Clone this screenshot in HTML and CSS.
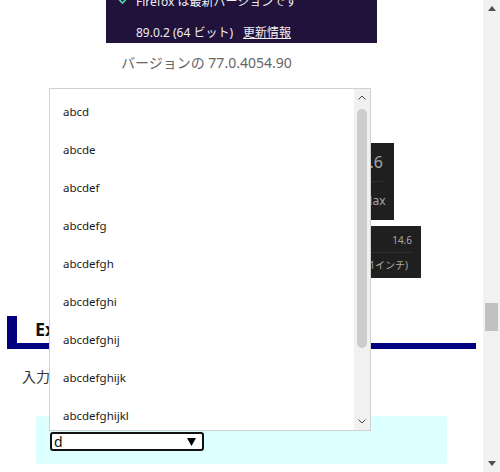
FILE: index.html
```html
<!DOCTYPE html>
<html lang="ja">
<head>
<meta charset="utf-8">
<title>Datalist</title>
<link rel="stylesheet" href="styles.css">
</head>
<body>
<div class="page">
  <div class="main">
    <div class="fx-box">
      <div class="fx-inner">
        <div class="fx-line">
          <svg class="check" width="12" height="10" viewBox="0 0 12 10"><path d="M1 4.5 L4.5 8 L11 1" fill="none" stroke="#4fdda6" stroke-width="1.6"/></svg>
          <span>Firefox は最新バージョンです</span>
        </div>
        <div class="fx-line"><span>89.0.2 (64 ビット)</span><span class="fx-link">更新情報</span></div>
      </div>
    </div>
    <p class="version">バージョンの 77.0.4054.90</p>
    <div class="specs">
      <div class="spec spec-a">
        <div class="spec-row big">14.6</div>
        <div class="spec-row">iPhone 12 Pro Max</div>
      </div>
      <div class="spec spec-b">
        <div class="spec-row">14.6</div>
        <div class="spec-row">iPad Pro (11インチ)</div>
      </div>
    </div>
    <h2 class="heading">Example</h2>
    <p class="label">入力</p>
    <div class="demo">
      <div class="select"><span>d</span><svg class="sel-arrow" width="9" height="8" viewBox="0 0 9 8"><polygon points="0,0 9,0 4.5,8" fill="#000"/></svg></div>
    </div>
    <div class="listbox">
      <ul class="options">
        <li>abcd</li>
        <li>abcde</li>
        <li>abcdef</li>
        <li>abcdefg</li>
        <li>abcdefgh</li>
        <li>abcdefghi</li>
        <li>abcdefghij</li>
        <li>abcdefghijk</li>
        <li>abcdefghijkl</li>
      </ul>
      <div class="lb-scroll">
        <svg class="lb-arrow" width="8" height="5" viewBox="0 0 8 5"><path d="M0.5 4.5 L4 1 L7.5 4.5" fill="none" stroke="#444" stroke-width="1"/></svg>
        <div class="lb-track"><div class="lb-thumb"></div></div>
        <svg class="lb-arrow" width="8" height="5" viewBox="0 0 8 5"><path d="M0.5 0.5 L4 4 L7.5 0.5" fill="none" stroke="#444" stroke-width="1"/></svg>
      </div>
    </div>
  </div>
  <div class="scrollbar">
    <div class="sb-btn"><svg width="8" height="5" viewBox="0 0 8 5"><polygon points="0,5 8,5 4,0" fill="#505050"/></svg></div>
    <div class="sb-track"><div class="sb-thumb"></div></div>
    <div class="sb-btn"><svg width="8" height="5" viewBox="0 0 8 5"><polygon points="0,0 8,0 4,5" fill="#505050"/></svg></div>
  </div>
</div>
</body>
</html>
```

FILE: styles.css
```css
html, body {
  margin: 0;
  padding: 0;
  background: #fff;
}
body {
  font-family: "Noto Sans", "Noto Sans CJK JP", sans-serif;
  color: #222;
  overflow: hidden;
}
.page {
  display: flex;
  width: 500px;
  height: 472px;
}
.main {
  position: relative;
  flex: 1;
  overflow: hidden;
}
.fx-box {
  margin-left: 106px;
  width: 271px;
  height: 43px;
  background: #20123a;
  overflow: hidden;
}
.fx-inner {
  margin-top: -8px;
  padding-left: 30px;
  display: flex;
  flex-direction: column;
  gap: 11px;
  color: #eeeef2;
  font-size: 12px;
}
.fx-line {
  position: relative;
  height: 20px;
  line-height: 20px;
  display: flex;
  gap: 10px;
  white-space: nowrap;
}
.check {
  position: absolute;
  left: -18px;
  top: 3px;
}
.fx-link {
  text-decoration: underline;
}
.version {
  margin: 10px 0 0 121px;
  font-size: 14px;
  line-height: 20px;
  color: #666;
}
.specs {
  margin-top: 70px;
  display: flex;
  flex-direction: column;
  gap: 6px;
}
.spec {
  background: #1f1f1f;
  color: #a8a8a8;
  text-align: right;
  white-space: nowrap;
  overflow: hidden;
}
.spec-a {
  margin-left: 280px;
  width: 103px;
  padding-right: 11px;
}
.spec-a .spec-row {
  height: 38px;
  line-height: 38px;
  font-size: 12px;
  padding-right: 1px;
}
.spec-a .spec-row.big {
  height: 38px;
  font-size: 16px;
  padding-right: 0;
  border-bottom: 1px solid #2f2f2f;
}
.spec-b {
  margin-left: 300px;
  width: 112px;
  padding-right: 9px;
}
.spec-b .spec-row {
  height: 26px;
  line-height: 28px;
  font-size: 10px;
}
.spec-b .spec-row + .spec-row {
  height: 25px;
  line-height: 25px;
  border-top: 1px solid #2f2f2f;
  padding-right: 4px;
}
.heading {
  margin: 38px 0 0 7px;
  width: 441px;
  height: 27px;
  padding-left: 18px;
  border-left: 10px solid #000080;
  border-bottom: 6px solid #000080;
  font-size: 18px;
  font-weight: bold;
  line-height: 27px;
  color: #111;
}
.label {
  margin: 18px 0 0 22px;
  font-size: 14px;
  line-height: 20px;
  color: #333;
}
.demo {
  margin: 29px 0 0 36px;
  width: 397px;
  height: 32px;
  padding: 16px 0 0 14px;
  background: #dcffff;
  border-radius: 4px;
}
.select {
  box-sizing: border-box;
  width: 154px;
  height: 19px;
  border: 2px solid #111;
  border-radius: 3px;
  background: #fff;
  display: flex;
  align-items: center;
  justify-content: space-between;
  padding: 0 6px 0 2px;
  font-size: 14px;
  line-height: 15px;
  color: #111;
}
.listbox {
  position: absolute;
  left: 49px;
  top: 88px;
  box-sizing: border-box;
  width: 322px;
  height: 343px;
  border: 1px solid #d0d0d0;
  background: #fff;
  display: flex;
  overflow: hidden;
}
.options {
  list-style: none;
  margin: 0;
  padding: 4px 0 0 0;
  flex: 1;
}
.options li {
  height: 38px;
  line-height: 38px;
  padding-left: 13px;
  font-size: 11.5px;
  color: #1a1a1a;
  white-space: nowrap;
}
.lb-scroll {
  width: 16px;
  background: #f1f1f1;
  display: flex;
  flex-direction: column;
  align-items: center;
  padding: 6px 0 6px;
  box-sizing: border-box;
}
.lb-arrow {
  flex: none;
}
.lb-track {
  flex: 1;
  width: 100%;
  display: flex;
  justify-content: center;
  padding-top: 9px;
}
.lb-thumb {
  width: 10px;
  height: 239px;
  background: #cdcdcd;
  border-radius: 5px;
}
.scrollbar {
  width: 17px;
  background: #f1f1f1;
  display: flex;
  flex-direction: column;
}
.sb-btn {
  height: 17px;
  display: flex;
  align-items: center;
  justify-content: center;
}
.sb-track {
  flex: 1;
  padding-top: 286px;
  display: flex;
  justify-content: center;
}
.sb-thumb {
  width: 13px;
  height: 28px;
  background: #c1c1c1;
}
```
